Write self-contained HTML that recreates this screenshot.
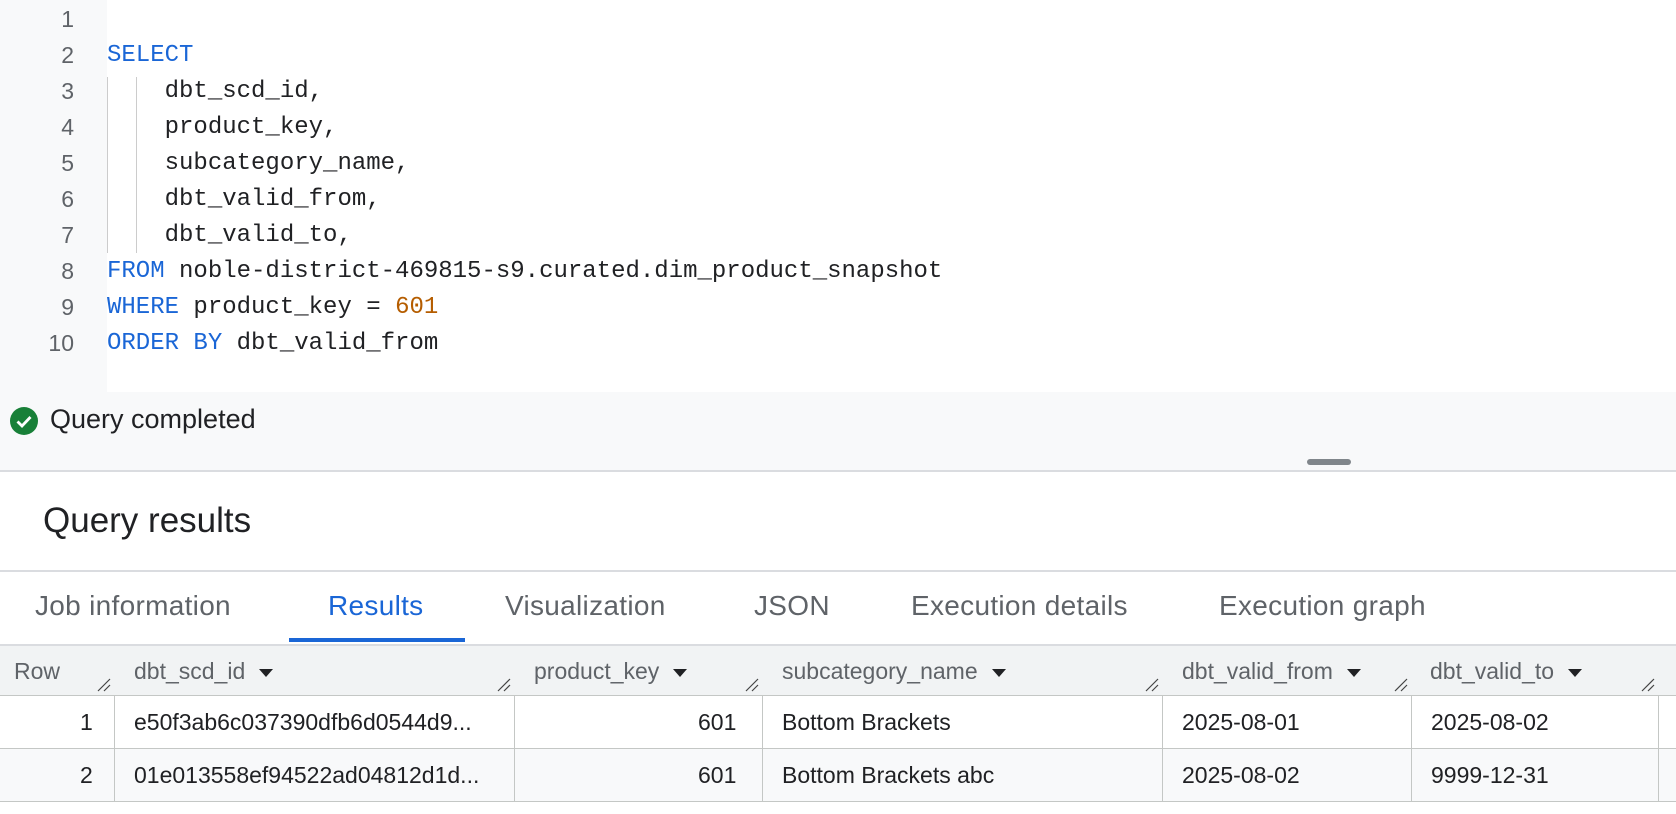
<!DOCTYPE html>
<html><head><meta charset="utf-8"><style>
*{margin:0;padding:0;box-sizing:border-box}
body{width:1676px;height:814px;background:#fff;position:relative;overflow:hidden;font-family:"Liberation Sans",Roboto,sans-serif;color:#202124}
.gut{position:absolute;left:0;top:0;width:107px;height:392px;background:#f8f9fa}
.ln{position:absolute;width:74px;text-align:right;font-family:"Liberation Sans",sans-serif;font-size:23px;color:#5f6368}
.code{position:absolute;left:107px;font-family:"Liberation Mono",monospace;font-size:24px;color:#202124;white-space:pre}
.k{color:#1a66d6}.n{color:#b55d00}
.guide{position:absolute;width:1px;background:#ccc;top:77px;height:176px}
.status{position:absolute;left:0;top:392px;width:1676px;height:80px;background:#f8f9fa;border-bottom:2px solid #dadce0}
.tab{position:absolute;top:590px;font-size:28px;letter-spacing:0.3px;color:#5f6368}
.hdr{position:absolute;top:644px;left:0;width:1676px;height:52px;background:#f1f3f4;border-top:2px solid #dadce0;border-bottom:1px solid #c4c7c5}
.th{position:absolute;top:12px;font-size:23px;color:#5f6368}
.tri{display:inline-block;width:0;height:0;border-left:7px solid transparent;border-right:7px solid transparent;border-top:8px solid #202124;margin-left:14px;vertical-align:middle}
.rs{position:absolute;top:32px;width:14px;height:14px}
.row{position:absolute;left:0;width:1676px;height:53px;border-bottom:1px solid #c4c7c5}
.td{position:absolute;top:13px;font-size:23px;color:#202124}
.vl{position:absolute;top:0;width:1px;height:100%;background:#c4c7c5}
</style></head><body>
<div class="gut"></div>
<div class="ln" style="top:6px">1</div>
<div class="ln" style="top:42px">2</div>
<div class="ln" style="top:78px">3</div>
<div class="ln" style="top:114px">4</div>
<div class="ln" style="top:150px">5</div>
<div class="ln" style="top:186px">6</div>
<div class="ln" style="top:222px">7</div>
<div class="ln" style="top:258px">8</div>
<div class="ln" style="top:294px">9</div>
<div class="ln" style="top:330px">10</div>
<div class="guide" style="left:107px"></div>
<div class="guide" style="left:136px"></div>
<div class="code" style="top:42px"><span class="k">SELECT</span></div>
<div class="code" style="top:78px">    dbt_scd_id,</div>
<div class="code" style="top:114px">    product_key,</div>
<div class="code" style="top:150px">    subcategory_name,</div>
<div class="code" style="top:186px">    dbt_valid_from,</div>
<div class="code" style="top:222px">    dbt_valid_to,</div>
<div class="code" style="top:258px"><span class="k">FROM</span> noble-district-469815-s9.curated.dim_product_snapshot</div>
<div class="code" style="top:294px"><span class="k">WHERE</span> product_key = <span class="n">601</span></div>
<div class="code" style="top:330px"><span class="k">ORDER BY</span> dbt_valid_from</div>
<div class="status">
<svg style="position:absolute;left:10px;top:15px" width="28" height="28" viewBox="0 0 28 28"><circle cx="14" cy="14" r="14" fill="#188038"/><path d="M7.5 14.5l4.5 4.5 8.5-9" stroke="#fff" stroke-width="2.8" fill="none"/></svg>
<div style="position:absolute;left:50px;top:12px;font-size:27px">Query completed</div>
<div style="position:absolute;left:1307px;top:67px;width:44px;height:6px;border-radius:3px;background:#80868b"></div>
</div>
<div style="position:absolute;left:43px;top:501px;font-size:35px">Query results</div>
<div style="position:absolute;left:0;top:570px;width:1676px;height:2px;background:#dadce0"></div>
<div class="tab" style="left:35px">Job information</div>
<div class="tab" style="left:328px;color:#1a66d6">Results</div>
<div class="tab" style="left:505px">Visualization</div>
<div class="tab" style="left:754px">JSON</div>
<div class="tab" style="left:911px">Execution details</div>
<div class="tab" style="left:1219px">Execution graph</div>
<div style="position:absolute;left:289px;top:638px;width:176px;height:4px;background:#1a66d6"></div>
<div class="hdr">
<div class="th" style="left:14px">Row</div>
<div class="th" style="left:134px">dbt_scd_id<span class="tri"></span></div>
<div class="th" style="left:534px">product_key<span class="tri"></span></div>
<div class="th" style="left:782px">subcategory_name<span class="tri"></span></div>
<div class="th" style="left:1182px">dbt_valid_from<span class="tri"></span></div>
<div class="th" style="left:1430px">dbt_valid_to<span class="tri"></span></div>
<svg class="rs" style="left:97px" viewBox="0 0 14 14"><path d="M1 13L13 1M7 13L13 7" stroke="#444" stroke-width="1.2"/></svg>
<svg class="rs" style="left:497px" viewBox="0 0 14 14"><path d="M1 13L13 1M7 13L13 7" stroke="#444" stroke-width="1.2"/></svg>
<svg class="rs" style="left:745px" viewBox="0 0 14 14"><path d="M1 13L13 1M7 13L13 7" stroke="#444" stroke-width="1.2"/></svg>
<svg class="rs" style="left:1145px" viewBox="0 0 14 14"><path d="M1 13L13 1M7 13L13 7" stroke="#444" stroke-width="1.2"/></svg>
<svg class="rs" style="left:1394px" viewBox="0 0 14 14"><path d="M1 13L13 1M7 13L13 7" stroke="#444" stroke-width="1.2"/></svg>
<svg class="rs" style="left:1641px" viewBox="0 0 14 14"><path d="M1 13L13 1M7 13L13 7" stroke="#444" stroke-width="1.2"/></svg>
</div>
<div class="row" style="top:696px;background:#fff">
<div class="vl" style="left:114px"></div><div class="vl" style="left:514px"></div><div class="vl" style="left:762px"></div><div class="vl" style="left:1162px"></div><div class="vl" style="left:1411px"></div><div class="vl" style="left:1658px"></div>
<div class="td" style="left:80px">1</div>
<div class="td" style="left:134px">e50f3ab6c037390dfb6d0544d9...</div>
<div class="td" style="left:698px">601</div>
<div class="td" style="left:782px">Bottom Brackets</div>
<div class="td" style="left:1182px">2025-08-01</div>
<div class="td" style="left:1431px">2025-08-02</div>
</div>
<div class="row" style="top:749px;background:#f8f9fa">
<div class="vl" style="left:114px"></div><div class="vl" style="left:514px"></div><div class="vl" style="left:762px"></div><div class="vl" style="left:1162px"></div><div class="vl" style="left:1411px"></div><div class="vl" style="left:1658px"></div>
<div class="td" style="left:80px">2</div>
<div class="td" style="left:134px">01e013558ef94522ad04812d1d...</div>
<div class="td" style="left:698px">601</div>
<div class="td" style="left:782px">Bottom Brackets abc</div>
<div class="td" style="left:1182px">2025-08-02</div>
<div class="td" style="left:1431px">9999-12-31</div>
</div>
</body></html>
